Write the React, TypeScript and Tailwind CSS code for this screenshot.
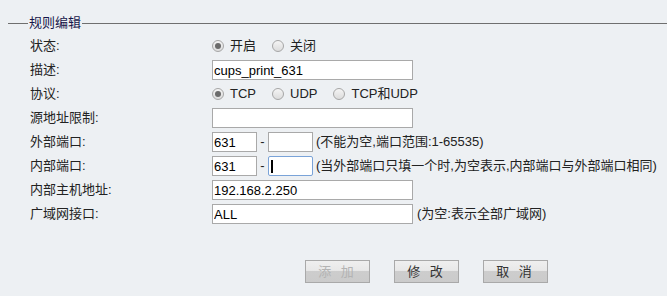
import React from "react";

const font = { fontFamily: '"Liberation Sans", Arial, "Noto Sans CJK SC", sans-serif' };

function Radio({ checked, label }: { checked?: boolean; label: string }) {
  return (
    <label className="flex items-center gap-[6px] mr-[16px]">
      <span className="flex items-center justify-center w-[12px] h-[12px] rounded-full border border-[#a6a6a6] bg-gradient-to-b from-[#f4f4f4] to-[#dcdcdc]">
        {checked && <span className="w-[6px] h-[6px] rounded-full bg-[#6b6b6b]" />}
      </span>
      <span>{label}</span>
    </label>
  );
}

function Row({ label, children }: { label: string; children?: React.ReactNode }) {
  return (
    <div className="flex items-center h-[24px]">
      <div className="w-[182px] shrink-0">{label}:</div>
      <div className="flex items-center">{children}</div>
    </div>
  );
}

function TextBox({ value, w = "w-[201px]" }: { value?: string; w?: string }) {
  return (
    <input
      readOnly
      value={value ?? ""}
      className={`${w} h-[20px] border border-[#a9a9a9] bg-white px-[1px] text-[13px] text-black outline-none`}
      style={font}
    />
  );
}

function Btn({ text, disabled }: { text: string; disabled?: boolean }) {
  return (
    <button
      className={`w-[65px] h-[23px] border border-[#a9a9a9] bg-[linear-gradient(to_bottom,#efefef_0%,#e8e8e8_45%,#cdcdcd_50%,#cbcbcb_100%)] text-[13px] font-normal tracking-[3px] ${disabled ? "text-[#b3b3b3]" : "text-[#333]"}`}
      style={font}
    >
      {text}
    </button>
  );
}

export default function App() {
  return (
    <div className="w-[667px] h-[296px] bg-[#edf0f3] overflow-hidden text-[13px] text-[#222]" style={font}>
      <div className="flex items-center pt-[15px] h-[31px]">
        <div className="w-[20px] ml-[8px] h-px bg-[#6f6f6f]" />
        <span className="px-px text-[#17174a] leading-[16px]">规则编辑</span>
        <div className="flex-1 h-px bg-[#6f6f6f]" />
      </div>
      <div className="pl-[30px] pt-[3px]">
        <Row label="状态">
          <Radio checked label="开启" />
          <Radio label="关闭" />
        </Row>
        <Row label="描述">
          <TextBox value="cups_print_631" />
        </Row>
        <Row label="协议">
          <Radio checked label="TCP" />
          <Radio label="UDP" />
          <Radio label="TCP和UDP" />
        </Row>
        <Row label="源地址限制">
          <TextBox />
        </Row>
        <Row label="外部端口">
          <TextBox value="631" w="w-[45px]" />
          <span className="w-[11px] text-center">-</span>
          <TextBox w="w-[45px]" />
          <span className="ml-[3px]">(不能为空,端口范围:1-65535)</span>
        </Row>
        <Row label="内部端口">
          <TextBox value="631" w="w-[45px]" />
          <span className="w-[11px] text-center">-</span>
          <div className="relative w-[45px] h-[20px] border border-[#7aa3d8] rounded-[2px] bg-white">
            <span className="absolute left-[2px] top-[3px] w-[2px] h-[13px] bg-black" />
          </div>
          <span className="ml-[3px]">(当外部端口只填一个时,为空表示,内部端口与外部端口相同)</span>
        </Row>
        <Row label="内部主机地址">
          <TextBox value="192.168.2.250" />
        </Row>
        <Row label="广域网接口">
          <TextBox value="ALL" />
          <span className="ml-[4px]">(为空:表示全部广域网)</span>
        </Row>
      </div>
      <div className="flex gap-[24px] ml-[305px] mt-[34px]">
        <Btn text="添 加" disabled />
        <Btn text="修 改" />
        <Btn text="取 消" />
      </div>
    </div>
  );
}
